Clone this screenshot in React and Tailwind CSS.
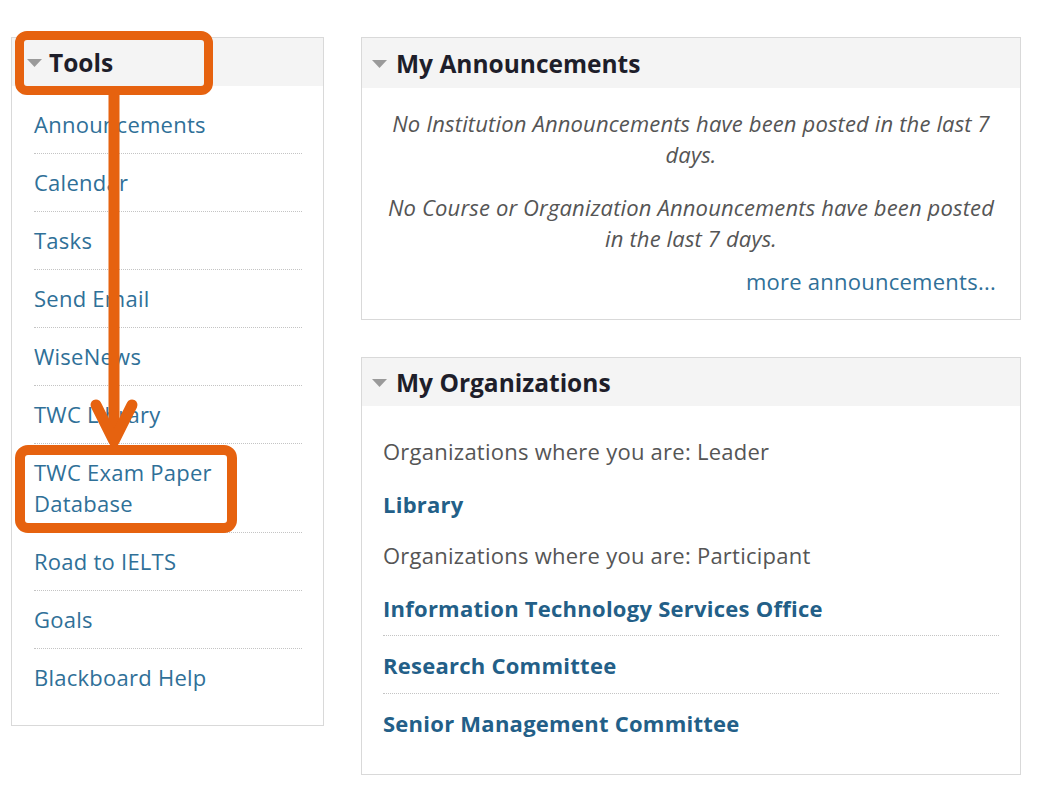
import React from "react";

const Tri = () => (
  <svg width="15" height="9" viewBox="0 0 15 9" className="shrink-0">
    <polygon points="0,0 15,0 7.5,8" fill="#9a9a9a" />
  </svg>
);

const tools = [
  "Announcements",
  "Calendar",
  "Tasks",
  "Send Email",
  "WiseNews",
  "TWC Library",
  "TWC Exam Paper Database",
  "Road to IELTS",
  "Goals",
  "Blackboard Help",
];

export default function App() {
  return (
    <div
      className="relative w-[1051px] h-[790px] bg-white overflow-hidden"
      style={{ fontFamily: '"Open Sans", "Liberation Sans", sans-serif' }}
    >
      <div className="flex items-start gap-[37px] pl-[11px] pt-[37px]">
        {/* Tools panel */}
        <div className="w-[313px] h-[689px] border border-[#d9d9d9] bg-white">
          <div className="h-[48px] bg-[#f4f4f4] flex items-center pl-[15px] pt-[3px] gap-[7px]">
            <Tri />
            <span className="text-[24.5px] font-bold text-[#1e1e2a] leading-none">Tools</span>
          </div>
          <ul className="pt-[10px] pl-[22px] pr-[21px]">
            {tools.map((t, i) => (
              <li
                key={t}
                className={
                  "pt-[13px] pb-[13px] text-[22px] tracking-[0.25px] leading-[31px] text-[#2f7098] " +
                  (i < tools.length - 1 ? "border-b border-dotted border-[#c4c4c4]" : "")
                }
              >
                {t === "TWC Exam Paper Database" ? (
                  <>
                    TWC Exam Paper
                    <br />
                    Database
                  </>
                ) : (
                  t
                )}
              </li>
            ))}
          </ul>
        </div>

        {/* Right column */}
        <div className="w-[660px] flex flex-col gap-[37px]">
          <div className="h-[283px] border border-[#d9d9d9] bg-white">
            <div className="h-[50px] bg-[#f4f4f4] flex items-center pl-[10px] pt-[2px] gap-[9px]">
              <Tri />
              <span className="text-[24.5px] font-bold text-[#1e1e2a] leading-none">My Announcements</span>
            </div>
            <div className="px-[20px] pt-[20px] text-[22px] tracking-[0.15px] leading-[31px] text-[#555555]">
              <p className="italic text-center">
                No Institution Announcements have been posted in the last 7
                <br />
                days.
              </p>
              <p className="italic text-center mt-[22px]">
                No Course or Organization Announcements have been posted
                <br />
                in the last 7 days.
              </p>
              <p className="text-right mt-[12px] pr-[4px] tracking-[0.25px] text-[#2f7098]">more announcements...</p>
            </div>
          </div>

          <div className="h-[418px] border border-[#d9d9d9] bg-white">
            <div className="h-[48px] bg-[#f4f4f4] flex items-center pl-[10px] pt-[2px] gap-[9px]">
              <Tri />
              <span className="text-[24.5px] font-bold text-[#1e1e2a] leading-none">My Organizations</span>
            </div>
            <div className="pl-[21px] pr-[21px] pt-[30px] text-[22px] tracking-[0.25px] leading-[31px]">
              <p className="text-[#555555]">Organizations where you are: Leader</p>
              <p className="mt-[22px] font-bold text-[#235f88]">Library</p>
              <p className="mt-[20px] text-[#555555]">Organizations where you are: Participant</p>
              <ul className="mt-[22px] font-bold text-[#235f88]">
                <li className="pb-[11px] border-b border-dotted border-[#c4c4c4]">
                  Information Technology Services Office
                </li>
                <li className="pt-[14px] pb-[12px] border-b border-dotted border-[#c4c4c4]">
                  Research Committee
                </li>
                <li className="pt-[14px]">Senior Management Committee</li>
              </ul>
            </div>
          </div>
        </div>
      </div>

      {/* Orange annotations */}
      <div className="absolute left-[15px] top-[31px] w-[198px] h-[64px] border-[9px] border-[#e6620f] rounded-[12px]" />
      <div className="absolute left-[15px] top-[445px] w-[222px] h-[88px] border-[10px] border-[#e6620f] rounded-[13px]" />
      <svg className="absolute left-0 top-0" width="300" height="460" viewBox="0 0 300 460">
        <line x1="114" y1="94" x2="114" y2="438" stroke="#e6620f" strokeWidth="11" />
        <polyline
          points="96,405 114,441 132,405"
          fill="none"
          stroke="#e6620f"
          strokeWidth="11"
          strokeLinecap="round"
          strokeLinejoin="round"
        />
      </svg>
    </div>
  );
}
